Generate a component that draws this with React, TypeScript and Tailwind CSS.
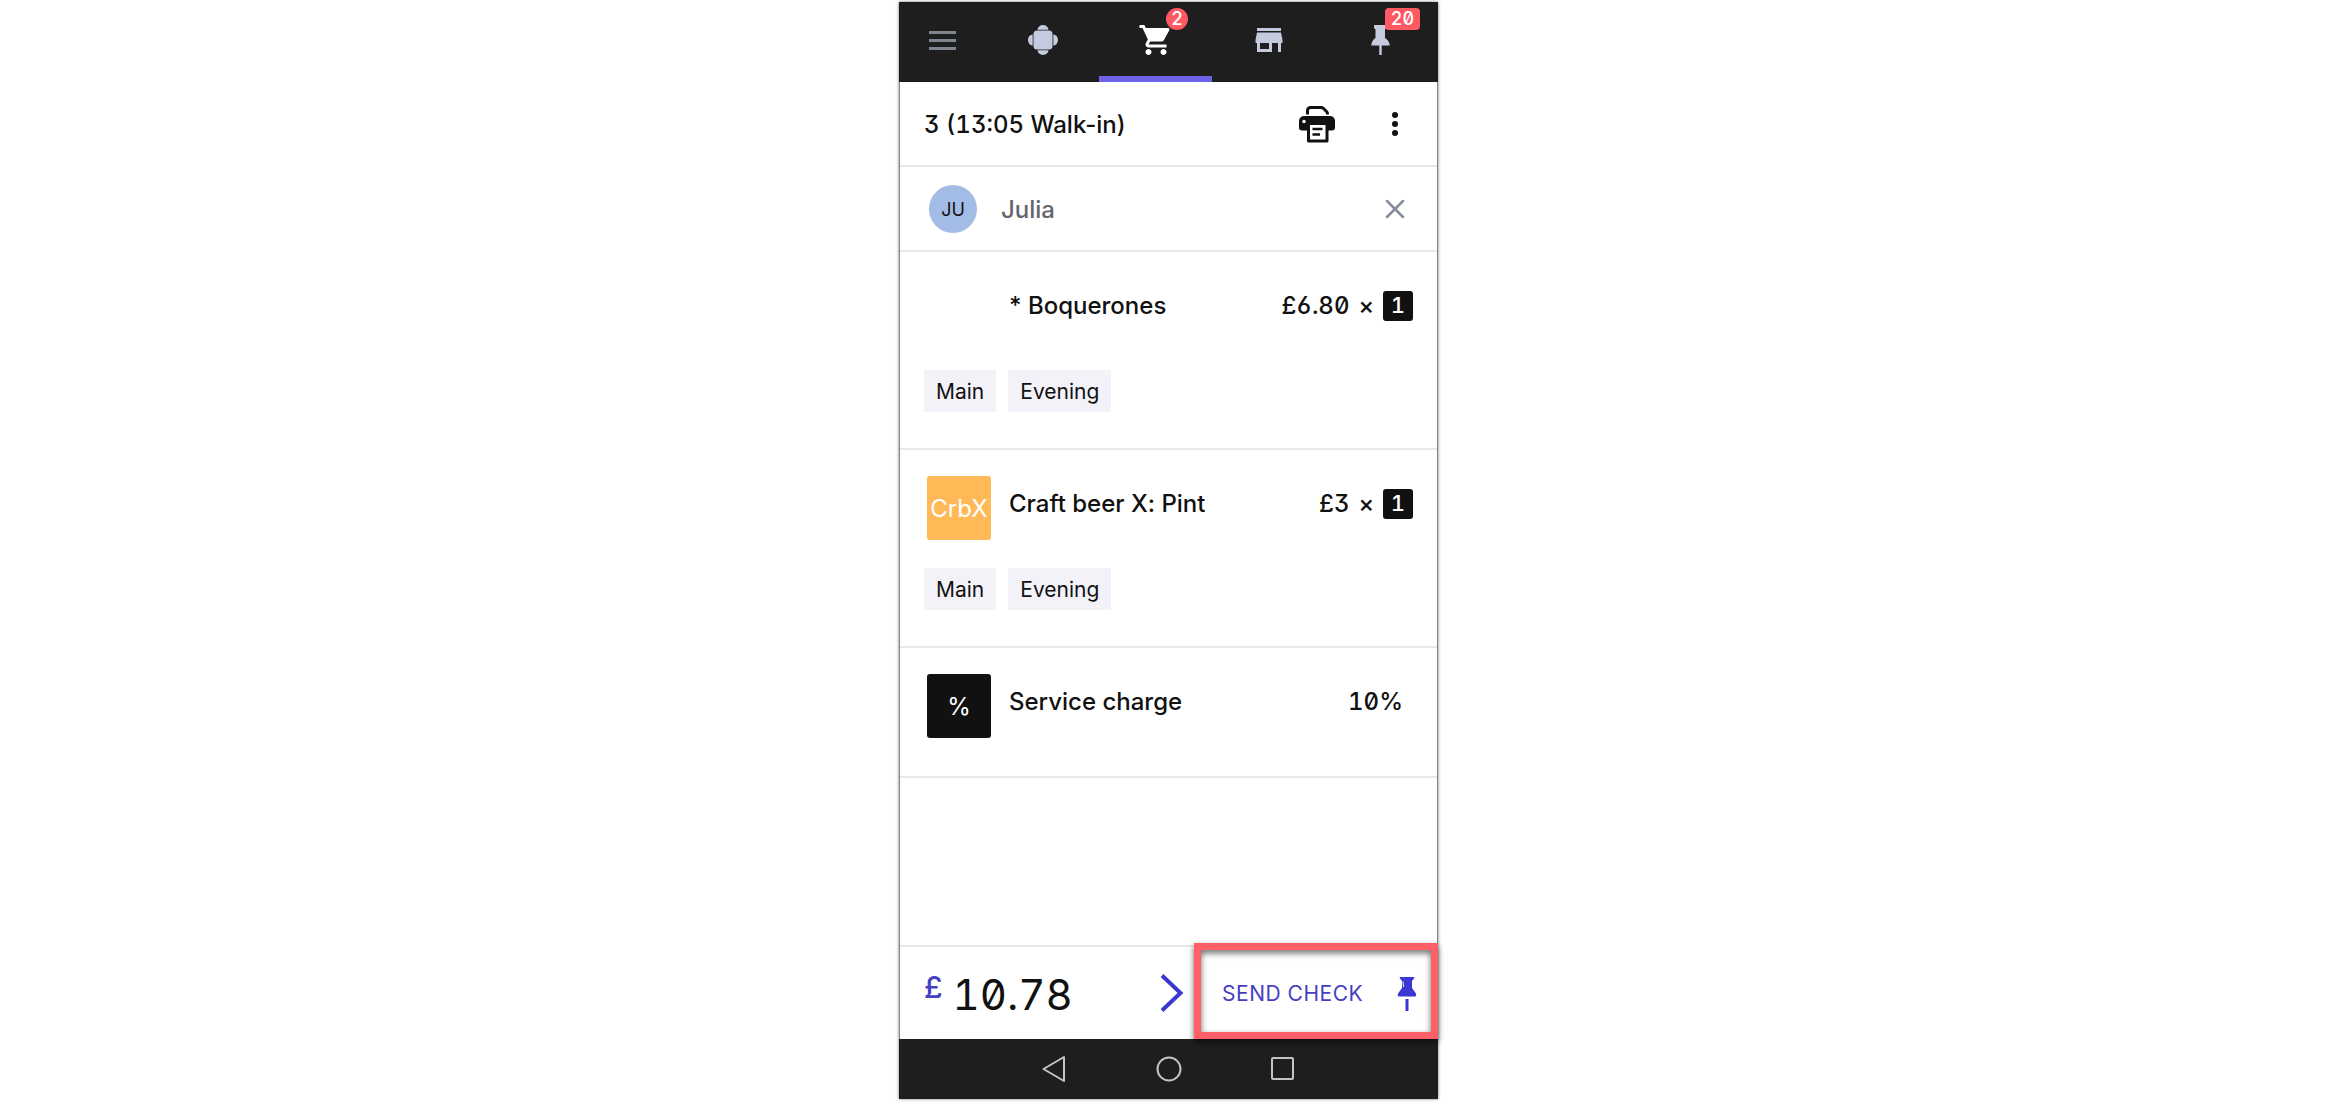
import React from "react";

const CartIcon = () => (
  <svg viewBox="0 0 24 24" className="size-9 fill-current" aria-hidden="true">
    <path d="M7 18c-1.1 0-1.99.9-1.99 2S5.900 22 7 22s2-.9 2-2-.9-2-2-2zM1 2v2h2l3.600 7.590-1.350 2.450c-.16.280-.25.610-.25.960 0 1.100.9 2 2 2h12v-2H7.420c-.14 0-.25-.11-.25-.25l.03-.12.9-1.630h7.450c.75 0 1.410-.41 1.750-1.030l3.580-6.490c.08-.14.120-.31.120-.48 0-.55-.45-1-1-1H5.210l-.94-2H1zm16 16c-1.100 0-1.990.9-1.990 2s.890 2 1.990 2 2-.9 2-2-.9-2-2-2z" />
  </svg>
);

const StoreIcon = () => (
  <svg viewBox="0 0 24 24" className="size-9 fill-current" aria-hidden="true">
    <path d="M20 4H4v2h16V4zm1 10v-2l-1-5H4l-1 5v2h1v6h10v-6h4v6h2v-6h1zm-9 4H6v-4h6v4z" />
  </svg>
);

const TableIcon = () => (
  <svg viewBox="0 0 30 30" className="size-[30px] fill-current" aria-hidden="true">
    <rect x="5.500" y="5.500" width="19" height="19" rx="3.500" />
    <path d="M9.500 4.700a5.500 4.700 0 0 1 11 0zM9.500 25.300a5.500 4.700 0 0 0 11 0zM4.700 9.500a4.700 5.500 0 0 0 0 11zM25.300 9.500a4.700 5.500 0 0 1 0 11z" />
  </svg>
);

const TabPinIcon = () => (
  <svg viewBox="0 0 22 32" className="h-8 w-[22px] fill-current" aria-hidden="true">
    <path d="M3 1h12v3l-1 1.500v8.500c2.500 1.600 4.500 4 4.800 7.500h-8.100V31H8.300v-9.500H.2C.5 18 2 15.600 4.500 14V5.500L3 4z" />
  </svg>
);

const PrinterIcon = () => (
  <svg viewBox="0 0 38 38" className="size-[38px]" fill="none" aria-hidden="true">
    <path d="M9.500 9.500V5.500a3 3 0 0 1 3-3h10.500c1 0 1.800.3 2.500 1L28.500 6.500c.6.600 1 1.400 1 2.300v.7" stroke="#111" strokeWidth="3" />
    <path d="M6 11h26a5 5 0 0 1 5 5v6.500a3 3 0 0 1-3 3H4a3 3 0 0 1-3-3V16a5 5 0 0 1 5-5z" fill="#111" />
    <path d="M10.500 18.500h18.500v17.500H10.500z" fill="#fff" stroke="#111" strokeWidth="3" strokeLinejoin="round" />
    <path d="M14.500 24h10M14.500 29.500h7.500" stroke="#111" strokeWidth="2.600" />
    <circle cx="6" cy="16.500" r="1.700" fill="#fff" />
  </svg>
);

const SendPinIcon = () => (
  <svg viewBox="0 0 20 36" className="h-9 w-5" aria-hidden="true">
    <path d="M3.500 1h13c.8 0 1 .6.700 1.300L15 5v7l3.800 5.300c.6 1 .7 3.200-.6 3.200H1.800c-1.300 0-1.200-2.200-.6-3.200L5 12V5L2.800 2.300C2.500 1.600 2.700 1 3.500 1z" fill="#3c37d2" />
    <path d="M6 5.500l.7 5.500" stroke="#d8d6fa" strokeWidth="1.200" />
    <path d="M10 23v12" stroke="#3c37d2" strokeWidth="3" />
  </svg>
);

function Tab({ label, active, badge, round, children }: {
  label: string; active?: boolean; badge?: string; round?: boolean; children: React.ReactNode;
}) {
  return (
    <button
      aria-label={label}
      className={`relative flex flex-1 items-center justify-center pb-1 ${active ? "text-white" : "text-[#c5cade]"}`}
    >
      {children}
      {badge && (
        <span
          className={`absolute top-[6px] flex h-[22px] items-center justify-center bg-[#ff5a64] text-lg font-[450] text-white tabular-nums slashed-zero ${
            round ? "left-[67px] w-[22px] rounded-full" : "right-[18px] w-[35px] rounded"
          }`}
        >
          {badge}
        </span>
      )}
      {active && <span className="absolute inset-x-0 bottom-0 h-[6px] bg-[#6c63e6]" />}
    </button>
  );
}

function Price({ amount, quantity }: { amount: string; quantity: string }) {
  return (
    <div className="flex items-center gap-[9px] text-2xl font-[450] tabular-nums slashed-zero">
      <span>{amount}</span>
      <span>×</span>
      <button aria-label={`Quantity ${quantity}`} className="flex size-[30px] items-center justify-center rounded-[3px] bg-[#111] text-[22px] text-white">
        {quantity}
      </button>
    </div>
  );
}

function Item({ swatch, name, tags, tail, children }: {
  swatch?: React.ReactNode; name: string; tags?: string[]; tail?: string; children?: React.ReactNode;
}) {
  return (
    <li className="border-b-2 border-[#e8e8e9] px-6 pt-[26px] pb-9">
      <div className="flex h-[66px] items-start">
        <div className="ml-[3px] mr-[18px] size-16 shrink-0">{swatch}</div>
        <div className="flex flex-1 items-center justify-between pt-3">
          <span className="text-2xl font-[450] [font-feature-settings:'calt'_0]">{name}</span>
          {tail ? <span className="pr-2.5 text-2xl font-[450] tabular-nums slashed-zero">{tail}</span> : children}
        </div>
      </div>
      {tags && (
        <div className="mt-[26px] flex gap-3">
          {tags.map((tag) => (
            <button key={tag} className="h-[42px] bg-[#f3f2f9] px-3 pt-0.5 text-[21px]">{tag}</button>
          ))}
        </div>
      )}
    </li>
  );
}

const swatchBase = "flex size-16 items-center justify-center rounded-[3px] pt-0.5 text-2xl text-white";

export default function App() {
  return (
    <div className="flex min-h-screen justify-center bg-white pt-[2px] pb-[11px] pl-[9px] font-['Inter',sans-serif] text-[#111] [font-feature-settings:'cv09','ss01'] [font-optical-sizing:none]">
      <div className="flex w-full max-w-[539px] flex-col shadow-[0_0_3px_#00000088]">
        <nav className="flex h-20 bg-[#1e1e1f]" aria-label="Sections">
          <button aria-label="Menu" className="flex w-[87px] items-center justify-center pb-1">
            <span className="flex w-[27px] flex-col gap-[5px]">
              <span className="h-[3px] bg-[#7f858c]" />
              <span className="h-[3px] bg-[#7f858c]" />
              <span className="h-[3px] bg-[#7f858c]" />
            </span>
          </button>
          <Tab label="Tables"><TableIcon /></Tab>
          <Tab label="Cart" active badge="2" round><CartIcon /></Tab>
          <Tab label="Store"><StoreIcon /></Tab>
          <Tab label="Pinned" badge="20"><TabPinIcon /></Tab>
        </nav>

        <main className="flex flex-1 flex-col border-x border-[#858585] bg-white">
          <header className="flex h-[85px] items-center border-b-2 border-[#e8e8e9] pl-6">
            <h1 className="flex-1 pt-0.5 text-2xl font-[450] slashed-zero">
              <span className="tabular-nums">3 (13:05</span> Walk-in)
            </h1>
            <button aria-label="Print" className="mr-14"><PrinterIcon /></button>
            <button aria-label="More" className="mr-[39px] flex flex-col gap-[3px]">
              <span className="size-[6px] rounded-full bg-[#111]" />
              <span className="size-[6px] rounded-full bg-[#111]" />
              <span className="size-[6px] rounded-full bg-[#111]" />
            </button>
          </header>

          <section className="flex h-[85px] items-center border-b-2 border-[#e8e8e9] pl-[29px]">
            <span className="mr-6 flex size-12 items-center justify-center rounded-full bg-[#a2bce6] pt-0.5 text-lg">JU</span>
            <span className="flex-1 pt-0.5 text-2xl font-[450] text-[#64656d]">Julia</span>
            <button aria-label="Remove guest" className="mr-8">
              <svg viewBox="0 0 20 20" className="size-5" stroke="#858d9d" strokeWidth="2.500" strokeLinecap="round" aria-hidden="true">
                <path d="M2 2l16 16M18 2L2 18" />
              </svg>
            </button>
          </section>

          <ul>
            <Item name="* Boquerones" tags={["Main", "Evening"]}>
              <Price amount="£6.80" quantity="1" />
            </Item>
            <Item swatch={<span className={`${swatchBase} bg-[#ffb957]`}>CrbX</span>} name="Craft beer X: Pint" tags={["Main", "Evening"]}>
              <Price amount="£3" quantity="1" />
            </Item>
            <Item swatch={<span className={`${swatchBase} bg-[#111]`}>%</span>} name="Service charge" tail="10%" />
          </ul>

          <footer className="mt-auto flex h-[94px] border-t-2 border-[#e8e8e9]">
            <button aria-label="Total £10.78" className="flex flex-1 items-center pl-6 pr-2.5">
              <span className="mr-2.5 mb-3 text-3xl font-[450] text-[#4540c0] tabular-nums">£</span>
              <span className="flex-1 pt-0.5 text-left text-[42px] tabular-nums slashed-zero">10.78</span>
              <svg viewBox="0 0 24 38" className="h-[38px] w-6" fill="none" stroke="#3c37d2" strokeWidth="4" aria-hidden="true">
                <path d="M2 1.500L20.500 19L2 36.500" />
              </svg>
            </button>
            <button className="relative z-10 flex w-[243px] items-center justify-between pl-7 pr-5 pt-0.5 text-[21px] tracking-wide text-[#4540c0]">
              SEND CHECK
              <SendPinIcon />
              <span className="absolute -top-[4px] -right-px bottom-0 left-0 border-[7px] border-[#ff5f67] drop-shadow-[0_3px_3px_#00000099]" />
            </button>
          </footer>
        </main>

        <nav className="flex h-[60px] items-center justify-center gap-[86px] bg-[#1e1e1f]" aria-label="System">
          {[
            { label: "Back", shape: <path d="M23 2v24L2.500 14z" /> },
            { label: "Home", shape: <circle cx="14" cy="14" r="11.500" /> },
            { label: "Recents", shape: <rect x="3" y="3" width="21" height="21" rx="1" /> },
          ].map(({ label, shape }) => (
            <button key={label} aria-label={label}>
              <svg viewBox="0 0 28 28" className="size-7" fill="none" stroke="#c4c4c4" strokeWidth="2" strokeLinejoin="round" aria-hidden="true">
                {shape}
              </svg>
            </button>
          ))}
        </nav>
      </div>
    </div>
  );
}
